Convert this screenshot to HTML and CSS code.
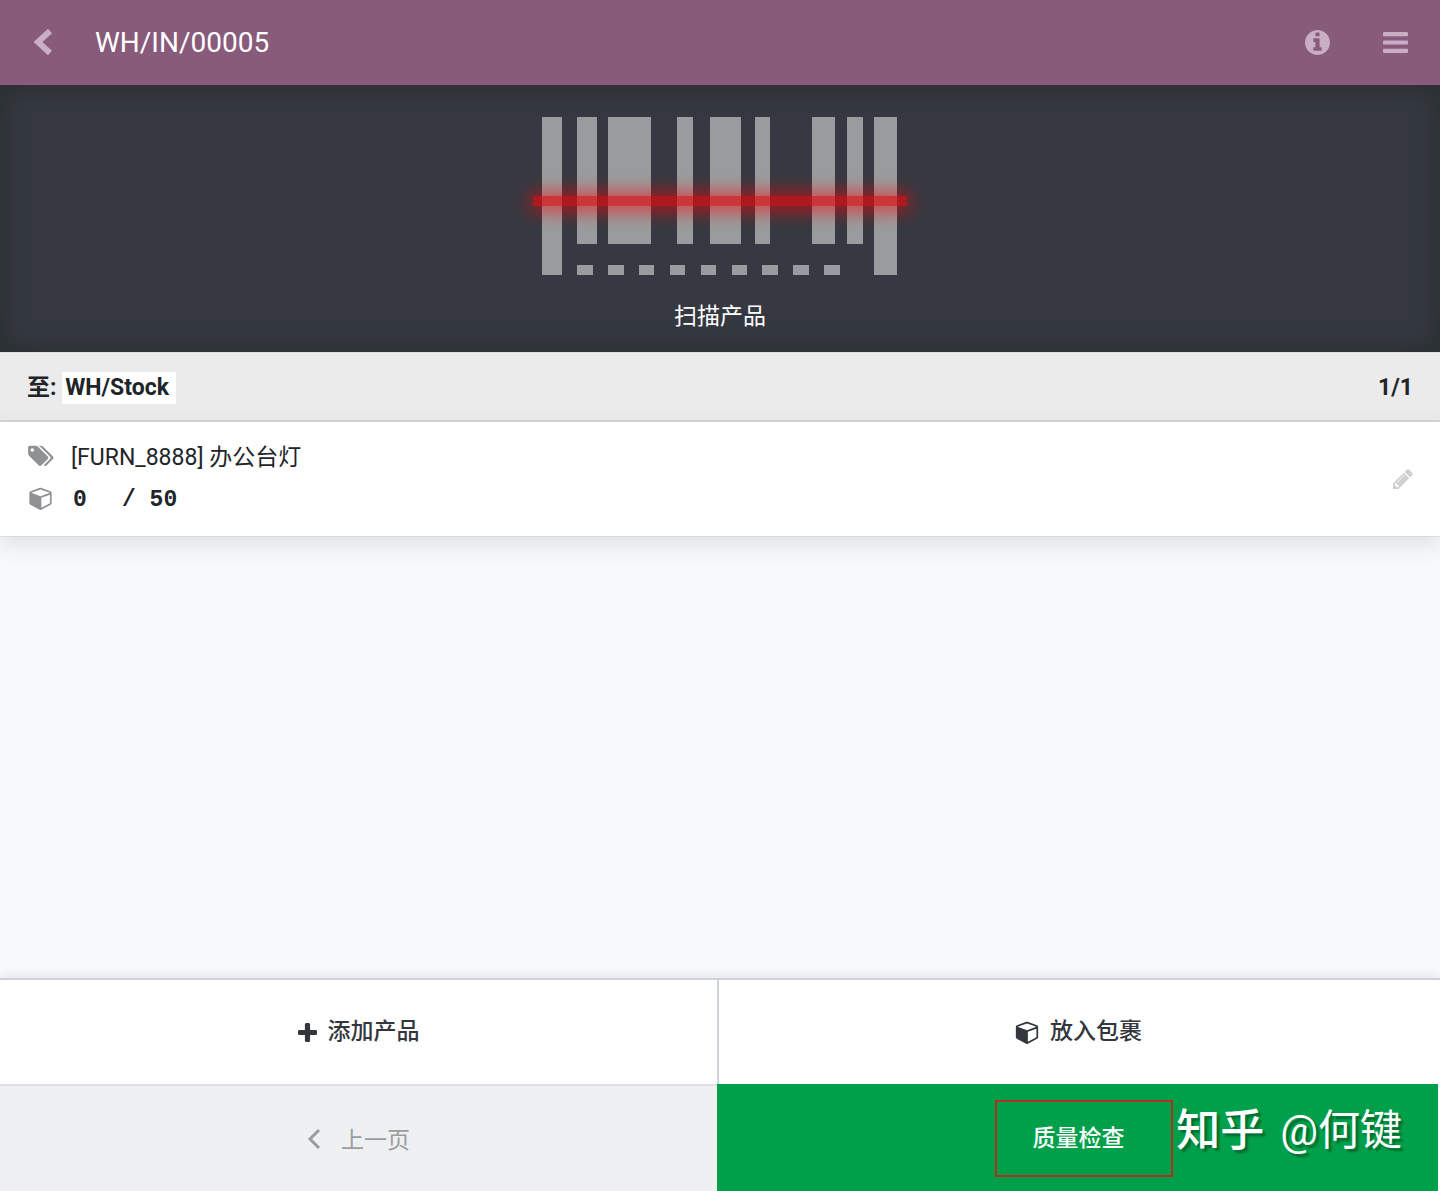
FILE: index.html
```
<!DOCTYPE html>
<html lang="zh-CN">
<head>
    <meta charset="UTF-8">
    <meta name="viewport" content="width=device-width, initial-scale=1.0">
    <title>WH/IN/00005</title>
    <link rel="stylesheet" href="styles.css">
</head>
<body>
    <header class="navbar">
        <button class="nav-btn" type="button" aria-label="返回">
            <svg class="icon-back" viewBox="0 0 20 28"><path d="M17 2L5 13l12 11" fill="none" stroke="currentColor" stroke-width="6"/></svg>
        </button>
        <h1 class="title">WH/IN/00005</h1>
        <button class="nav-btn" type="button" aria-label="信息">
            <svg class="icon-nav" viewBox="128 128 1536 1536"><path d="M1152 1376v-160q0-14-9-23t-23-9h-96v-512q0-14-9-23t-23-9h-320q-14 0-23 9t-9 23v160q0 14 9 23t23 9h96v320h-96q-14 0-23 9t-9 23v160q0 14 9 23t23 9h448q14 0 23-9t9-23zm-128-896v-160q0-14-9-23t-23-9h-192q-14 0-23 9t-9 23v160q0 14 9 23t23 9h192q14 0 23-9t9-23zm640 416q0 209-103 385.5t-279.5 279.5-385.5 103-385.5-103-279.5-279.5-103-385.5 103-385.5 279.5-279.5 385.5-103 385.5 103 279.5 279.5 103 385.5z"/></svg>
        </button>
        <button class="nav-btn" type="button" aria-label="菜单">
            <svg class="icon-nav" viewBox="128 128 1536 1536"><path d="M1664 1344v128q0 26-19 45t-45 19h-1408q-26 0-45-19t-19-45v-128q0-26 19-45t45-19h1408q26 0 45 19t19 45zm0-512v128q0 26-19 45t-45 19h-1408q-26 0-45-19t-19-45v-128q0-26 19-45t45-19h1408q26 0 45 19t19 45zm0-512v128q0 26-19 45t-45 19h-1408q-26 0-45-19t-19-45v-128q0-26 19-45t45-19h1408q26 0 45 19t19 45z"/></svg>
        </button>
    </header>

    <section class="scanner">
        <div class="barcode">
            <svg class="bars" viewBox="0 0 356 159">
                <path d="M0 0h20v158H0zM35 0h20v127H35zM66 0h43v127H66zM135 0h16v127h-16zM168 0h31v127h-31zM213 0h15v127h-15zM270 0h23v127h-23zM305 0h16v127h-16zM332 0h23v158h-23z"/>
                <path d="M35 148h16v10H35zM66 148h16v10H66zM97 148h15v10H97zM128 148h15v10h-15zM159 148h15v10h-15zM190 148h15v10h-15zM220 148h16v10h-16zM251 148h16v10h-16zM282 148h16v10h-16z"/>
            </svg>
            <span class="laser"></span>
        </div>
        <p class="scan-message">扫描产品</p>
    </section>

    <main class="lines">
        <div class="location">
            <div>至: <span class="location-name">WH/Stock</span></div>
            <div>1/1</div>
        </div>
        <div class="line">
            <div class="line-info">
                <div class="line-row">
                    <svg class="icon-line" viewBox="64 0 1984 1792"><path d="M576 448q0-53-37.500-90.500t-90.500-37.500-90.500 37.500-37.500 90.500 37.500 90.500 90.500 37.500 90.500-37.500 37.500-90.500zm1067 576q0 53-37 90l-491 492q-39 37-91 37-53 0-90-37l-715-716q-38-37-64.500-101t-26.500-117v-416q0-52 38-90t90-38h416q53 0 117 26.500t102 64.500l715 714q37 39 37 91zm384 0q0 53-37 90l-491 492q-39 37-91 37-36 0-59-14t-53-45l470-470q37-37 37-90 0-52-37-91l-715-714q-38-38-102-64.500t-117-26.500h224q53 0 117 26.500t102 64.500l715 714q37 39 37 91z"/></svg>
                    <span>[FURN_8888] 办公台灯</span>
                </div>
                <div class="line-row">
                    <svg class="icon-line" viewBox="-64 0 1792 1792"><path d="M896 1629l640-349v-636l-640 233v752zm-64-865l698-254-698-254-698 254zm832-252v768q0 35-18 65t-49 47l-704 384q-28 16-61 16t-61-16l-704-384q-31-17-49-47t-18-65v-768q0-40 23-73t61-47l704-256q22-8 44-8t44 8l704 256q38 14 61 47t23 73z"/></svg>
                    <span class="qty"><span class="qty-done">0</span>/ 50</span>
                </div>
            </div>
            <button class="edit" type="button" aria-label="编辑">
                <svg class="icon-edit" viewBox="128 128 1536 1536"><path d="M491 1536l91-91-235-235-91 91v107h128v128h107zm523-928q0-22-22-22-10 0-17 7l-542 542q-7 7-7 17 0 22 22 22 10 0 17-7l542-542q7-7 7-17zm-54-192l416 416-832 832h-416v-416zm683 96q0 53-37 90l-166 166-416-416 166-165q36-38 90-38 53 0 91 38l235 234q37 39 37 91z"/></svg>
            </button>
        </div>
    </main>

    <footer class="controls">
        <button class="control" type="button">
            <svg class="icon-plus" viewBox="192 128 1408 1408"><path d="M1600 736v192q0 40-28 68t-68 28h-416v416q0 40-28 68t-68 28h-192q-40 0-68-28t-28-68v-416h-416q-40 0-68-28t-28-68v-192q0-40 28-68t68-28h416v-416q0-40 28-68t68-28h192q40 0 68 28t28 68v416h416q40 0 68 28t28 68z"/></svg>
            添加产品
        </button>
        <button class="control" type="button">
            <svg class="icon-control" viewBox="-64 0 1792 1792"><path d="M896 1629l640-349v-636l-640 233v752zm-64-865l698-254-698-254-698 254zm832-252v768q0 35-18 65t-49 47l-704 384q-28 16-61 16t-61-16l-704-384q-31-17-49-47t-18-65v-768q0-40 23-73t61-47l704-256q22-8 44-8t44 8l704 256q38 14 61 47t23 73z"/></svg>
            放入包裹
        </button>
        <button class="control previous" type="button" disabled>
            <svg class="icon-previous" viewBox="0 0 14 26"><path d="M12 2L3 11l9 9" fill="none" stroke="currentColor" stroke-width="3"/></svg>
            上一页
        </button>
        <button class="control check" type="button">
            <span class="highlight">质量检查</span>
        </button>
        <div class="watermark"><b>知乎</b><span>@何键</span></div>
    </footer>
</body>
</html>
```

FILE: styles.css
```
* {
    box-sizing: border-box;
}
body {
    background: #f8f9fb;
    color: #212529;
    font-family: Roboto, "Noto Sans CJK SC", sans-serif;
    font-size: 23px;
    line-height: 34px;
    margin: 0;
    display: flex;
    flex-direction: column;
    min-height: 100vh;
}
button {
    font: inherit;
    color: inherit;
    background: none;
    border: none;
    padding: 0;
}
svg {
    display: block;
    fill: currentColor;
    flex: none;
}
.navbar {
    display: flex;
    align-items: center;
    height: 85px;
    padding-right: 6px;
    background: #885b7b;
    color: #fff;
}
.nav-btn {
    display: flex;
    align-items: center;
    justify-content: center;
    width: 78px;
    height: 84px;
    color: #c9aec4;
}
.nav-btn:first-child {
    width: 86px;
}
.icon-back {
    width: 20px;
    height: 28px;
}
.icon-nav {
    width: 25px;
    height: 25px;
}
.title {
    flex: 1;
    margin: 0;
    padding-left: 9px;
    font-size: 28px;
    font-weight: 400;
}
.scanner {
    display: flex;
    flex-direction: column;
    align-items: center;
    height: 267px;
    padding-top: 32px;
    background: #363941;
    box-shadow: inset 0 0 32px #272d2d;
}
.barcode {
    position: relative;
    width: 356px;
}
.bars {
    width: 100%;
    color: #999c9e;
}
.laser {
    position: absolute;
    left: -9px;
    right: -9px;
    top: 79px;
    height: 10px;
    background: rgba(225, 10, 15, 0.7);
    box-shadow: 0 1px 20px 2px rgba(255, 0, 0, 0.8);
}
.scan-message {
    margin: 24px 0 0;
    color: #fff;
}
.lines {
    flex: 1;
}
.location {
    display: flex;
    justify-content: space-between;
    align-items: center;
    height: 70px;
    padding: 2px 27px 0;
    background: #ebebeb;
    border-top: 1px solid #dee0e3;
    border-bottom: 2px solid #d3d6d8;
    font-weight: 700;
}
.location-name {
    display: inline-block;
    padding: 0 7px 0 3px;
    background: #fff;
    line-height: 32px;
}
.line {
    display: flex;
    justify-content: space-between;
    align-items: center;
    height: 115px;
    padding: 0 27px;
    background: #fff;
    border-bottom: 1px solid #d8dbde;
    box-shadow: 0 8px 20px rgba(70, 85, 100, 0.14);
}
.line-info {
    display: flex;
    flex-direction: column;
    gap: 8px;
}
.line-row {
    display: flex;
    align-items: center;
    gap: 17px;
}
.icon-line {
    width: 27px;
    height: 24px;
    margin-bottom: 4px;
    color: #909192;
}
.qty {
    font-family: "Liberation Mono", monospace;
    font-weight: 700;
}
.qty-done {
    display: inline-block;
    width: 51px;
    padding-left: 2px;
}
.edit {
    color: #d0d0d0;
}
.icon-edit {
    width: 20px;
    height: 20px;
}
.controls {
    position: relative;
    display: grid;
    grid-template-columns: 1fr 1fr;
    padding-right: 2px;
    background: #fff;
    border-top: 2px solid #ced3d9;
    box-shadow: 0 -2px 10px rgba(70, 85, 100, 0.12);
}
.control {
    display: flex;
    align-items: center;
    justify-content: center;
    gap: 11px;
    height: 104px;
    color: #33363d;
    font-weight: 500;
}
.control:first-child {
    border-right: 2px solid #ced3d9;
}
.control.previous {
    gap: 20px;
    height: 107px;
    padding: 4px 2px 0 0;
    background: #eff0f2;
    border-top: 2px solid #dddfe3;
    color: #9a9c9f;
    font-weight: 400;
}
.control.check {
    height: 107px;
    margin-left: -2px;
    padding: 2px 0 0 2px;
    background: #00a04a;
    color: #fff;
}
.icon-plus {
    width: 19px;
    height: 19px;
}
.icon-control {
    width: 24px;
    height: 24px;
}
.icon-previous {
    width: 14px;
    height: 26px;
}
/* marks the quality check action */
.highlight {
    position: relative;
}
.highlight::after {
    content: "";
    position: absolute;
    top: -22px;
    right: -48px;
    bottom: -21px;
    left: -38px;
    border: 2px solid #b0301f;
}
.watermark {
    position: absolute;
    right: 38px;
    bottom: 30px;
    display: flex;
    align-items: center;
    gap: 16px;
    color: #fff;
    font-size: 42px;
    line-height: 60px;
    text-shadow: 3px 3px 2px rgba(0, 60, 25, 0.5);
    pointer-events: none;
}
.watermark b {
    font-size: 44px;
    font-weight: 500;
}
```
